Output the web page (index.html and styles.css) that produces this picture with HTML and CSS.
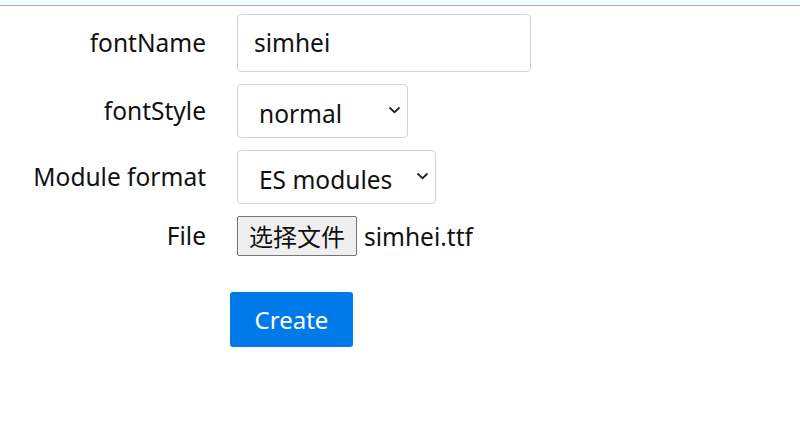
FILE: index.html
```html
<!DOCTYPE html>
<html lang="en">
<head>
<meta charset="utf-8">
<title>Font Creator</title>
<link rel="stylesheet" href="styles.css">
</head>
<body>
<div class="topbar"></div>
<form class="form">
  <label class="lbl">fontName</label>
  <div class="field"><div class="text-input">simhei</div></div>

  <label class="lbl">fontStyle</label>
  <div class="field">
    <div class="select sel-style"><span>normal</span>
      <svg class="chev" width="13" height="8" viewBox="0 0 13 8"><path d="M1.5 1.5 L6.5 6.2 L11.5 1.5" fill="none" stroke="#222" stroke-width="1.8"/></svg>
    </div>
  </div>

  <label class="lbl">Module format</label>
  <div class="field">
    <div class="select sel-mod"><span>ES modules</span>
      <svg class="chev" width="13" height="8" viewBox="0 0 13 8"><path d="M1.5 1.5 L6.5 6.2 L11.5 1.5" fill="none" stroke="#222" stroke-width="1.8"/></svg>
    </div>
  </div>

  <label class="lbl lbl-file">File</label>
  <div class="field file-field">
    <span class="file-btn">选择文件</span><span class="file-name">simhei.ttf</span>
  </div>

  <div class="actions"><span class="btn-create">Create</span></div>
</form>
</body>
</html>
```
FILE: styles.css
```css
* { box-sizing: border-box; }
body {
  margin: 0;
  background: #fff;
  font-family: "Noto Sans", "Open Sans", sans-serif;
  font-size: 24.5px;
  color: #111;
}
.topbar {
  height: 6px;
  background: #f0fefe;
  border-bottom: 1px solid #a3b3b3;
}
.form {
  display: grid;
  grid-template-columns: 206px auto;
  column-gap: 31px;
  row-gap: 12px;
  padding-top: 8px;
  align-items: center;
}
.lbl {
  text-align: right;
  line-height: 1;
  white-space: nowrap;
}
.field { display: flex; align-items: center; }
.text-input {
  width: 294px;
  height: 58px;
  border: 1px solid #cfd4d8;
  border-radius: 4px;
  padding: 0 16px;
  display: flex;
  align-items: center;
  line-height: 1;
}
.select {
  height: 54px;
  border: 1px solid #cfd4d8;
  border-radius: 4px;
  padding: 6px 6px 0 21px;
  display: flex;
  align-items: center;
  justify-content: space-between;
  line-height: 1;
}
.sel-style { width: 171px; }
.sel-mod { width: 199px; }
.chev { margin-top: -8px; }
.file-field { height: 40px; }
.file-btn {
  height: 40px;
  width: 120px;
  background: #efefef;
  border: 1px solid #767676;
  border-radius: 2px;
  font-family: "Noto Sans CJK SC", sans-serif;
  font-size: 24px;
  line-height: 1;
  display: flex;
  align-items: center;
  justify-content: center;
  color: #111;
}
.file-name { margin-left: 7px; }
.actions { grid-column: 2; margin-left: -7px; margin-top: 24px; }
.btn-create {
  display: inline-flex;
  align-items: center;
  justify-content: center;
  width: 123px;
  height: 55px;
  background: #007ae8;
  color: #fff;
  border-radius: 3px;
  font-size: 24px;
}
```
